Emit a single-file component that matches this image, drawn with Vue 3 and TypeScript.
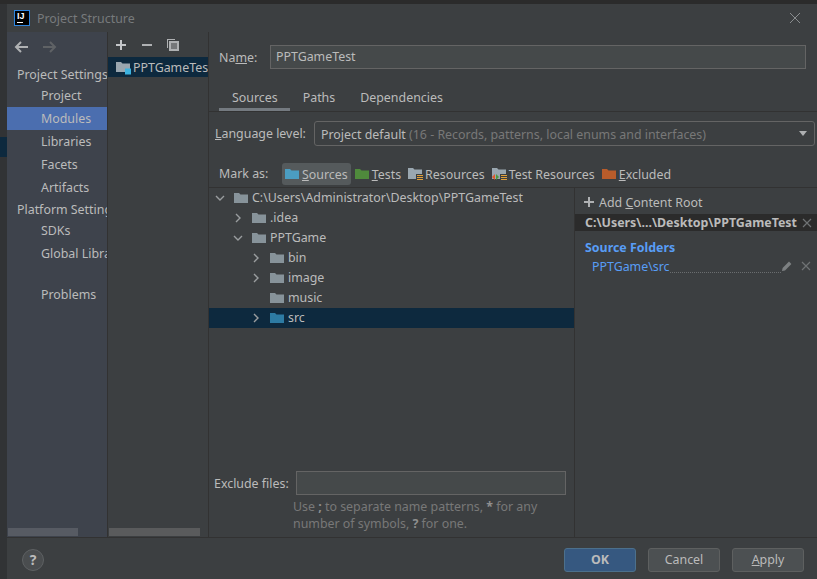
<script setup lang="ts">
interface TreeRow {
  name: string
  depth: number
  arrow: '' | 'right' | 'down'
  selected?: boolean
}

const sidebarTop = [
  { label: 'Project Settings', head: true },
  { label: 'Project' },
  { label: 'Modules', active: true },
  { label: 'Libraries' },
  { label: 'Facets' },
  { label: 'Artifacts' },
  { label: 'Platform Settings', head: true },
  { label: 'SDKs' },
  { label: 'Global Libraries' },
]

const tree: TreeRow[] = [
  { name: 'C:\\Users\\Administrator\\Desktop\\PPTGameTest', depth: 0, arrow: 'down' },
  { name: '.idea', depth: 1, arrow: 'right' },
  { name: 'PPTGame', depth: 1, arrow: 'down' },
  { name: 'bin', depth: 2, arrow: 'right' },
  { name: 'image', depth: 2, arrow: 'right' },
  { name: 'music', depth: 2, arrow: '' },
  { name: 'src', depth: 2, arrow: 'right', selected: true },
]

const folder = 'M1 3h5l1.5 1.5H15V13H1z'
</script>

<template>
  <div class="screen">
    <div class="backdrop-top"></div>
    <div class="main">
      <div class="backdrop-left"><div class="backdrop-sel"></div></div>
      <div class="dialog">
        <div class="titlebar">
          <div class="logo"><span>IJ</span><i></i></div>
          <span class="title">Project Structure</span>
          <svg class="close" width="14" height="14" viewBox="0 0 14 14"><path d="M2 2l10 10M12 2L2 12" stroke="#8a8d8f" stroke-width="1" fill="none" /></svg>
        </div>

        <div class="body">
          <aside class="sidebar">
            <div class="nav-arrows">
              <svg width="16" height="14" viewBox="0 0 16 14"><path d="M14 7H2M7 2L2 7l5 5" stroke="#afb1b3" stroke-width="2" fill="none" /></svg>
              <svg width="16" height="14" viewBox="0 0 16 14"><path d="M2 7h12M9 2l5 5-5 5" stroke="#5f6265" stroke-width="2" fill="none" /></svg>
            </div>
            <div class="nav-list">
              <div
                v-for="item in sidebarTop"
                :key="item.label"
                class="nav-item"
                :class="{ head: item.head, active: item.active }"
              >{{ item.label }}</div>
              <div class="nav-item problems">Problems</div>
            </div>
            <div class="scroll"><div class="thumb side-thumb"></div></div>
          </aside>

          <section class="modules">
            <div class="mod-toolbar">
              <svg width="12" height="12" viewBox="0 0 12 12"><path d="M6 1v10M1 6h10" stroke="#c4c6c8" stroke-width="2" /></svg>
              <svg width="12" height="12" viewBox="0 0 12 12"><path d="M1 6h10" stroke="#afb1b3" stroke-width="2" /></svg>
              <svg class="copy" width="14" height="14" viewBox="0 0 14 14"><path d="M1 1h8v1H2v8H1z M3 3h10v10H3z" fill="#afb1b3" /><path d="M5 6h6M5 8h6M5 10h6" stroke="#3c3f41" stroke-width="1" /></svg>
            </div>
            <div class="mod-row">
              <svg width="16" height="16" viewBox="0 0 16 16"><path :d="folder" fill="#9aa7b0" /><rect x="10" y="9.5" width="6" height="6" fill="#3db3e0" /></svg>
              <span class="mod-name">PPTGameTest</span>
            </div>
            <div class="grow"></div>
            <div class="scroll"><div class="thumb mod-thumb"></div></div>
          </section>

          <section class="content">
            <div class="name-row">
              <label>Na<u>m</u>e:</label>
              <div class="field name-field">PPTGameTest</div>
            </div>

            <div class="tabs">
              <div class="tab on">Sources</div>
              <div class="tab">Paths</div>
              <div class="tab">Dependencies</div>
            </div>

            <div class="lang-row">
              <label><u>L</u>anguage level:</label>
              <div class="combo">
                <span>Project default <em>(16 - Records, patterns, local enums and interfaces)</em></span>
                <i class="caret"></i>
              </div>
            </div>

            <div class="mark-row">
              <span class="mark-label">Mark as:</span>
              <div class="mark on">
                <svg width="16" height="16" viewBox="0 0 16 16"><path :d="folder" fill="#4b9dc1" /></svg>
                <span><u>S</u>ources</span>
              </div>
              <div class="mark">
                <svg width="16" height="16" viewBox="0 0 16 16"><path :d="folder" fill="#4f8a3c" /></svg>
                <span><u>T</u>ests</span>
              </div>
              <div class="mark">
                <svg width="16" height="16" viewBox="0 0 16 16"><path d="M1 2h5l1.5 1.5H15V8H9v5H1z" fill="#9aa7b0" /><path d="M10 9.5h6M10 11.5h6M10 13.5h6" stroke="#e0a03c" stroke-width="1" /></svg>
                <span>Resources</span>
              </div>
              <div class="mark">
                <svg width="16" height="16" viewBox="0 0 16 16"><path d="M1 2h5l1.5 1.5H15V8H9v5H1z" fill="#9aa7b0" /><path d="M1 11l3-3v6z" fill="#e05a2a" /><path d="M8 11L5 8v6z" fill="#4f9a3c" /><path d="M10 9.5h6M10 11.5h6M10 13.5h6" stroke="#e0a03c" stroke-width="1" /></svg>
                <span>Test Resources</span>
              </div>
              <div class="mark">
                <svg width="16" height="16" viewBox="0 0 16 16"><path :d="folder" fill="#b85c2b" /></svg>
                <span><u>E</u>xcluded</span>
              </div>
            </div>

            <div class="split">
              <div class="left-pane">
                <div class="tree">
                  <div
                    v-for="row in tree"
                    :key="row.name"
                    class="tree-row"
                    :class="{ selected: row.selected }"
                  >
                    <div class="indent" :style="{ width: `${row.depth * 18 + 4}px` }"></div>
                    <svg class="arrow" width="14" height="14" viewBox="0 0 14 14">
                      <path v-if="row.arrow === 'right'" d="M5 3l4 4-4 4" stroke="#9a9d9f" stroke-width="1.4" fill="none" />
                      <path v-if="row.arrow === 'down'" d="M3 5l4 4 4-4" stroke="#9a9d9f" stroke-width="1.4" fill="none" />
                    </svg>
                    <svg class="tree-folder" width="16" height="16" viewBox="0 0 16 16"><path :d="folder" :fill="row.selected ? '#2d7ba3' : '#87939a'" /></svg>
                    <span>{{ row.name }}</span>
                  </div>
                </div>
                <div class="exclude">
                  <div class="exclude-row">
                    <label>Exclude files:</label>
                    <div class="field exclude-field"></div>
                  </div>
                  <p class="hint">Use <b>;</b> to separate name patterns, <b>*</b> for any number of symbols, <b>?</b> for one.</p>
                </div>
              </div>

              <div class="right-pane">
                <div class="add-root">
                  <svg width="12" height="12" viewBox="0 0 12 12"><path d="M6 1v10M1 6h10" stroke="#afb1b3" stroke-width="2" /></svg>
                  <span>Add <u>C</u>ontent Root</span>
                </div>
                <div class="root-head">
                  <span>C:\Users\...\Desktop\PPTGameTest</span>
                  <svg width="10" height="10" viewBox="0 0 10 10"><path d="M1 1l8 8M9 1L1 9" stroke="#6f7274" stroke-width="1.2" /></svg>
                </div>
                <div class="folders-title">Source Folders</div>
                <div class="folder-item">
                  <span>PPTGame\src</span>
                  <div class="dots"></div>
                  <svg width="12" height="12" viewBox="0 0 12 12"><path d="M1 11l.6-3L8 1.6 10.4 4 4 10.4z" fill="#7d8082" /></svg>
                  <svg class="x" width="10" height="10" viewBox="0 0 10 10"><path d="M1 1l8 8M9 1L1 9" stroke="#6f7274" stroke-width="1.2" /></svg>
                </div>
              </div>
            </div>
          </section>
        </div>

        <footer class="footer">
          <div class="help">?</div>
          <div class="buttons">
            <button class="btn primary">OK</button>
            <button class="btn">Cancel</button>
            <button class="btn"><u>A</u>pply</button>
          </div>
        </footer>
      </div>
    </div>
  </div>
</template>

<style scoped>
.screen {
  width: 817px;
  height: 579px;
  display: flex;
  flex-direction: column;
  overflow: hidden;
  background: #3c3f41;
  color: #bbbbbb;
  font-family: "Noto Sans", "Open Sans", sans-serif;
  font-size: 12.4px;
}
.backdrop-top {
  height: 4px;
  background: #2b2b2b;
}
.main {
  flex: 1;
  display: flex;
  min-height: 0;
}
.backdrop-left {
  width: 7px;
  background: #313335;
  padding-top: 133px;
}
.backdrop-sel {
  height: 20px;
  background: #0d293e;
}
.dialog {
  flex: 1;
  display: flex;
  flex-direction: column;
  min-width: 0;
}
.titlebar {
  height: 28px;
  display: flex;
  align-items: center;
  padding: 0 15px 0 7px;
  gap: 7px;
}
.logo {
  width: 16px;
  height: 16px;
  background: #000;
  border: 1px solid #2f86e0;
  box-sizing: border-box;
  display: flex;
  flex-direction: column;
  align-items: flex-start;
  padding: 2px 0 0 2px;
}
.logo span {
  color: #fff;
  font-size: 9px;
  font-weight: 700;
  line-height: 7px;
  font-family: "Liberation Sans", sans-serif;
}
.logo i {
  width: 6px;
  height: 1px;
  background: #fff;
  margin-top: 2px;
}
.title {
  flex: 1;
  color: #777a7c;
}
.body {
  flex: 1;
  display: flex;
  min-height: 0;
  border-bottom: 1px solid #323232;
}
.sidebar {
  width: 100px;
  flex-shrink: 0;
  background: #3e434c;
  border-right: 1px solid #323232;
  display: flex;
  flex-direction: column;
  overflow: hidden;
}
.nav-arrows {
  height: 30px;
  display: flex;
  align-items: center;
  gap: 11px;
  padding-left: 7px;
}
.nav-list {
  flex: 1;
  padding-top: 2px;
  white-space: nowrap;
}
.nav-item {
  height: 23px;
  line-height: 23px;
  padding-left: 34px;
}
.nav-item.head {
  height: 20px;
  line-height: 22px;
  padding-left: 10px;
}
.nav-item.active {
  background: #4b6eaf;
}
.problems {
  margin-top: 18px;
}
.scroll {
  height: 9px;
  flex-shrink: 0;
  padding: 0 1px;
}
.thumb {
  height: 8px;
}
.side-thumb {
  width: 70px;
  background: #575b63;
}
.modules {
  width: 100px;
  flex-shrink: 0;
  border-right: 1px solid #323232;
  display: flex;
  flex-direction: column;
  overflow: hidden;
}
.mod-toolbar {
  height: 25px;
  display: flex;
  align-items: center;
  gap: 14px;
  padding-left: 7px;
}
.copy {
  margin-left: -1px;
}
.mod-row {
  height: 20px;
  background: #0d293e;
  display: flex;
  align-items: center;
  gap: 2px;
  padding-left: 7px;
  white-space: nowrap;
}
.mod-row svg {
  flex-shrink: 0;
}
.grow {
  flex: 1;
}
.mod-thumb {
  width: 91px;
  background: #5a5b5c;
}
.content {
  flex: 1;
  min-width: 0;
  display: flex;
  flex-direction: column;
}
.name-row {
  height: 24px;
  margin-top: 13px;
  display: flex;
  align-items: center;
  padding: 0 11px 0 10px;
}
.name-row label {
  width: 51px;
}
.field {
  background: #45494a;
  border: 1px solid #646464;
  box-sizing: border-box;
}
.name-field {
  flex: 1;
  height: 24px;
  line-height: 22px;
  padding-left: 5px;
}
.tabs {
  margin-top: 17px;
  height: 25px;
  display: flex;
  padding-left: 10px;
  border-bottom: 1px solid #323232;
}
.tab {
  padding: 0 12.5px;
  line-height: 24px;
}
.tab.on {
  padding-left: 13px;
  box-shadow: inset 0 -3px 0 #747a80;
}
.lang-row {
  margin-top: 9px;
  height: 25px;
  display: flex;
  align-items: center;
  padding: 0 2px 0 6px;
}
.lang-row label {
  width: 99px;
}
.combo {
  flex: 1;
  height: 25px;
  border: 1px solid #646464;
  border-radius: 3px;
  box-sizing: border-box;
  background: #3c3f41;
  display: flex;
  align-items: center;
  justify-content: space-between;
  padding: 0 7px 0 6px;
}
.combo span {
  padding-top: 1px;
}
.combo em {
  font-style: normal;
  color: #787878;
}
.caret {
  width: 0;
  height: 0;
  border-left: 4px solid transparent;
  border-right: 4px solid transparent;
  border-top: 5px solid #aeb0b2;
}
.mark-row {
  margin-top: 17px;
  height: 24px;
  display: flex;
  align-items: flex-start;
  padding-left: 10px;
  white-space: nowrap;
  border-bottom: 1px solid #323232;
}
.mark-label {
  width: 63px;
  line-height: 21px;
}
.mark {
  height: 22px;
  display: flex;
  align-items: center;
  gap: 2px;
  padding: 0 3px 0 2px;
  margin-right: 1px;
  border-radius: 3px;
}
.mark.on {
  background: #555a5c;
}
.split {
  flex: 1;
  display: flex;
  min-height: 0;
}
.left-pane {
  width: 365px;
  flex-shrink: 0;
  border-right: 1px solid #323232;
  display: flex;
  flex-direction: column;
}
.tree {
  flex: 1;
}
.tree-row {
  height: 20px;
  display: flex;
  align-items: center;
  white-space: nowrap;
}
.tree-row.selected {
  background: #0d293e;
}
.indent {
  flex-shrink: 0;
}
.arrow {
  flex-shrink: 0;
  margin-right: 6px;
}
.tree-folder {
  flex-shrink: 0;
}
.tree-row span {
  margin-left: 3px;
  padding-bottom: 2px;
}
.exclude {
  height: 66px;
}
.exclude-row {
  display: flex;
  align-items: center;
  height: 24px;
  padding-left: 5px;
}
.exclude-row label {
  width: 82px;
}
.exclude-field {
  width: 270px;
  height: 24px;
}
.hint {
  margin: 3px 0 0 84px;
  width: 270px;
  color: #787878;
  line-height: 17px;
}
.hint b {
  color: #8f8f8f;
  font-weight: 700;
}
.right-pane {
  flex: 1;
  min-width: 0;
  overflow: hidden;
}
.add-root {
  height: 26px;
  display: flex;
  align-items: center;
  gap: 4px;
  padding: 2px 0 0 8px;
  box-sizing: border-box;
}
.root-head {
  height: 17px;
  background: #2b2b2b;
  display: flex;
  align-items: center;
  justify-content: space-between;
  padding: 0 5px 0 10px;
  font-weight: 700;
  white-space: nowrap;
}
.folders-title {
  margin: 8px 0 0 10px;
  color: #589df6;
  font-weight: 700;
  line-height: 18px;
}
.folder-item {
  display: flex;
  align-items: center;
  height: 18px;
  padding: 0 6px 0 17px;
  color: #589df6;
}
.dots {
  flex: 1;
  border-bottom: 1px dotted #6a6d6f;
  height: 12px;
}
.x {
  margin-left: 8px;
}
.footer {
  height: 41px;
  display: flex;
  align-items: center;
  justify-content: space-between;
  padding: 2px 13px 0 15px;
  box-sizing: border-box;
}
.help {
  width: 22px;
  height: 22px;
  border-radius: 50%;
  border: 1px solid #5e6163;
  background: #4a4d4f;
  box-sizing: border-box;
  text-align: center;
  line-height: 20px;
  font-weight: 700;
  font-size: 14px;
}
.buttons {
  display: flex;
  gap: 12px;
}
.btn {
  width: 72px;
  height: 24px;
  border: 1px solid #5e6060;
  border-radius: 3px;
  background: #4c5052;
  color: #bbbbbb;
  font: inherit;
  padding: 0;
}
.btn.primary {
  background: #365880;
  border-color: #4c708c;
  font-weight: 700;
}
</style>

<style>
html, body {
  margin: 0;
  background: #3c3f41;
}
</style>
